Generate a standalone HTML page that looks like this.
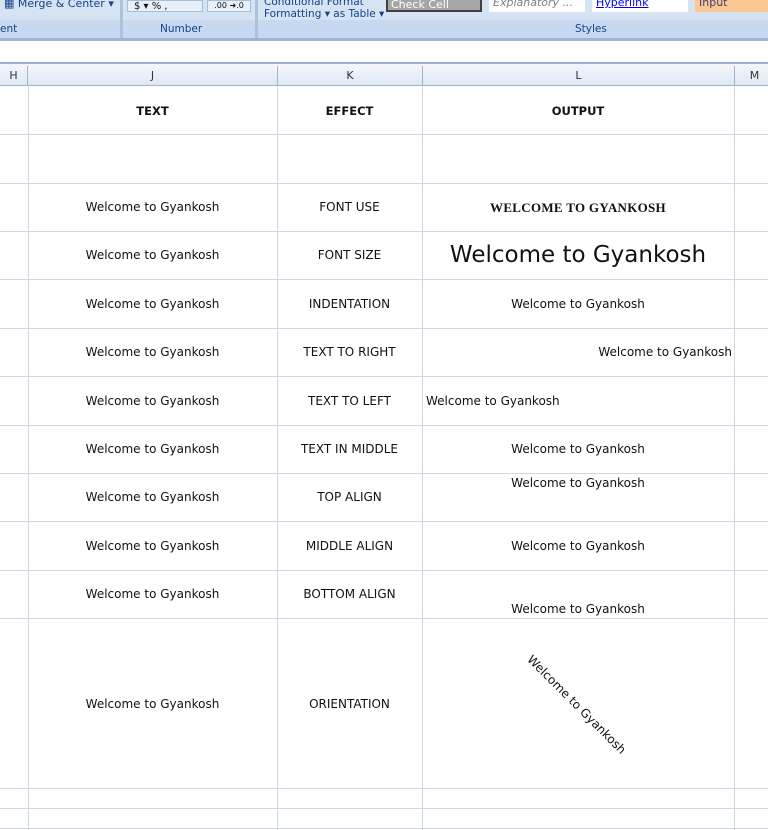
<!DOCTYPE html>
<html><head><style>
*{margin:0;padding:0;box-sizing:border-box}
body{width:768px;height:830px;overflow:hidden;background:#fff;font-family:"DejaVu Sans","Liberation Sans",sans-serif;position:relative;color:#111}
.a{position:absolute}
.v{position:absolute;width:1px;background:#d0d7e5;top:86px;bottom:0}
.h{position:absolute;height:1px;background:#d0d7e5;left:0;right:0}
.t{position:absolute;font-size:12px;text-align:center;white-space:nowrap}
.hd{position:absolute;top:66px;height:20px;font-size:11px;color:#333;text-align:center;line-height:20px;border-right:1px solid #9eb6ce}
</style></head><body>
<div class="a" style="left:0;top:0;width:768px;height:38px;background:#d5e3f3"></div>
<div class="a" style="left:0;top:20px;width:768px;height:18px;background:#c6d9f0"></div>
<div class="a" style="left:120px;top:0;width:3px;height:38px;background:#aac3e0"></div>
<div class="a" style="left:255px;top:0;width:3px;height:38px;background:#aac3e0"></div>
<div class="a" style="left:4px;top:-3px;font-size:11px;color:#15428b">▦ Merge &amp; Center ▾</div>
<div class="a" style="left:127px;top:0;width:76px;height:12px;background:#e8eff8;border:1px solid #a6bdd8;font-size:10px;padding-left:6px">$ ▾ % ,</div>
<div class="a" style="left:207px;top:0;width:44px;height:12px;background:#e8eff8;border:1px solid #a6bdd8;font-size:8px;text-align:center">.00 ➜.0</div>
<div class="a" style="left:264px;top:-4px;font-size:10.5px;color:#15428b;line-height:12px">Conditional Format<br>Formatting ▾ as Table ▾</div>
<div class="a" style="left:386px;top:-4px;width:96px;height:16px;background:#a5a5a5;border:2px solid #3f3f3f;color:#fff;font-size:11px;padding-left:3px">Check Cell</div>
<div class="a" style="left:489px;top:-4px;width:96px;height:16px;background:#fff;color:#7f7f7f;font-style:italic;font-size:11px;padding-left:4px">Explanatory ...</div>
<div class="a" style="left:592px;top:-4px;width:96px;height:16px;background:#fff;color:#0000ff;text-decoration:underline;font-size:11px;padding-left:4px">Hyperlink</div>
<div class="a" style="left:695px;top:-4px;width:80px;height:16px;background:#fbc793;color:#3f3f76;font-size:11px;padding-left:4px">Input</div>
<div class="a" style="left:0;top:23px;font-size:10.5px;color:#15428b">ent</div>
<div class="a" style="left:160px;top:23px;font-size:10.5px;color:#15428b">Number</div>
<div class="a" style="left:575px;top:23px;font-size:10.5px;color:#15428b">Styles</div>
<div class="a" style="left:0;top:38px;width:768px;height:3px;background:#9cb4d3"></div>
<div class="a" style="left:0;top:62px;width:768px;height:2px;background:#9cb4d3"></div>
<div class="a" style="left:0;top:64px;width:768px;height:22px;background:linear-gradient(#f3f7fb,#dfe8f3);border-bottom:1px solid #9eb6ce"></div>
<div class="hd" style="left:0;width:28px">H</div>
<div class="hd" style="left:28px;width:250px">J</div>
<div class="hd" style="left:278px;width:145px">K</div>
<div class="hd" style="left:423px;width:312px">L</div>
<div class="hd" style="left:735px;width:40px">M</div>
<div class="v" style="left:28px"></div><div class="v" style="left:277px"></div><div class="v" style="left:422px"></div><div class="v" style="left:734px"></div>
<div class="h" style="top:134px"></div><div class="h" style="top:183px"></div><div class="h" style="top:231px"></div><div class="h" style="top:279px"></div><div class="h" style="top:328px"></div><div class="h" style="top:376px"></div><div class="h" style="top:425px"></div><div class="h" style="top:473px"></div><div class="h" style="top:521px"></div><div class="h" style="top:570px"></div><div class="h" style="top:618px"></div><div class="h" style="top:788px"></div><div class="h" style="top:808px"></div><div class="h" style="top:828px"></div>
<div class="t" style="left:28px;width:249px;top:104px;font-weight:bold;font-size:11.5px">TEXT</div>
<div class="t" style="left:277px;width:145px;top:104px;font-weight:bold;font-size:11.5px">EFFECT</div>
<div class="t" style="left:422px;width:312px;top:104px;font-weight:bold;font-size:11.5px">OUTPUT</div>
<div class="t" style="left:28px;width:249px;top:200px">Welcome to Gyankosh</div>
<div class="t" style="left:28px;width:249px;top:248px">Welcome to Gyankosh</div>
<div class="t" style="left:28px;width:249px;top:297px">Welcome to Gyankosh</div>
<div class="t" style="left:28px;width:249px;top:345px">Welcome to Gyankosh</div>
<div class="t" style="left:28px;width:249px;top:394px">Welcome to Gyankosh</div>
<div class="t" style="left:28px;width:249px;top:442px">Welcome to Gyankosh</div>
<div class="t" style="left:28px;width:249px;top:490px">Welcome to Gyankosh</div>
<div class="t" style="left:28px;width:249px;top:539px">Welcome to Gyankosh</div>
<div class="t" style="left:28px;width:249px;top:587px">Welcome to Gyankosh</div>
<div class="t" style="left:28px;width:249px;top:697px">Welcome to Gyankosh</div>
<div class="t" style="left:277px;width:145px;top:200px">FONT USE</div>
<div class="t" style="left:277px;width:145px;top:248px">FONT SIZE</div>
<div class="t" style="left:277px;width:145px;top:297px">INDENTATION</div>
<div class="t" style="left:277px;width:145px;top:345px">TEXT TO RIGHT</div>
<div class="t" style="left:277px;width:145px;top:394px">TEXT TO LEFT</div>
<div class="t" style="left:277px;width:145px;top:442px">TEXT IN MIDDLE</div>
<div class="t" style="left:277px;width:145px;top:490px">TOP ALIGN</div>
<div class="t" style="left:277px;width:145px;top:539px">MIDDLE ALIGN</div>
<div class="t" style="left:277px;width:145px;top:587px">BOTTOM ALIGN</div>
<div class="t" style="left:277px;width:145px;top:697px">ORIENTATION</div>
<div class="t" style="left:422px;width:312px;top:200px;font-family:'Liberation Serif',serif;font-weight:bold;font-size:13px;letter-spacing:0.3px">WELCOME TO GYANKOSH</div>
<div class="t" style="left:422px;width:312px;top:242px;font-size:23px">Welcome to Gyankosh</div>
<div class="t" style="left:422px;width:312px;top:297px">Welcome to Gyankosh</div>
<div class="t" style="right:36px;top:345px">Welcome to Gyankosh</div>
<div class="t" style="left:426px;top:394px">Welcome to Gyankosh</div>
<div class="t" style="left:422px;width:312px;top:442px">Welcome to Gyankosh</div>
<div class="t" style="left:422px;width:312px;top:476px">Welcome to Gyankosh</div>
<div class="t" style="left:422px;width:312px;top:539px">Welcome to Gyankosh</div>
<div class="t" style="left:422px;width:312px;top:602px">Welcome to Gyankosh</div>
<div class="t" style="left:510px;top:697px;width:132px;transform:rotate(45deg)">Welcome to Gyankosh</div>
</body></html>
